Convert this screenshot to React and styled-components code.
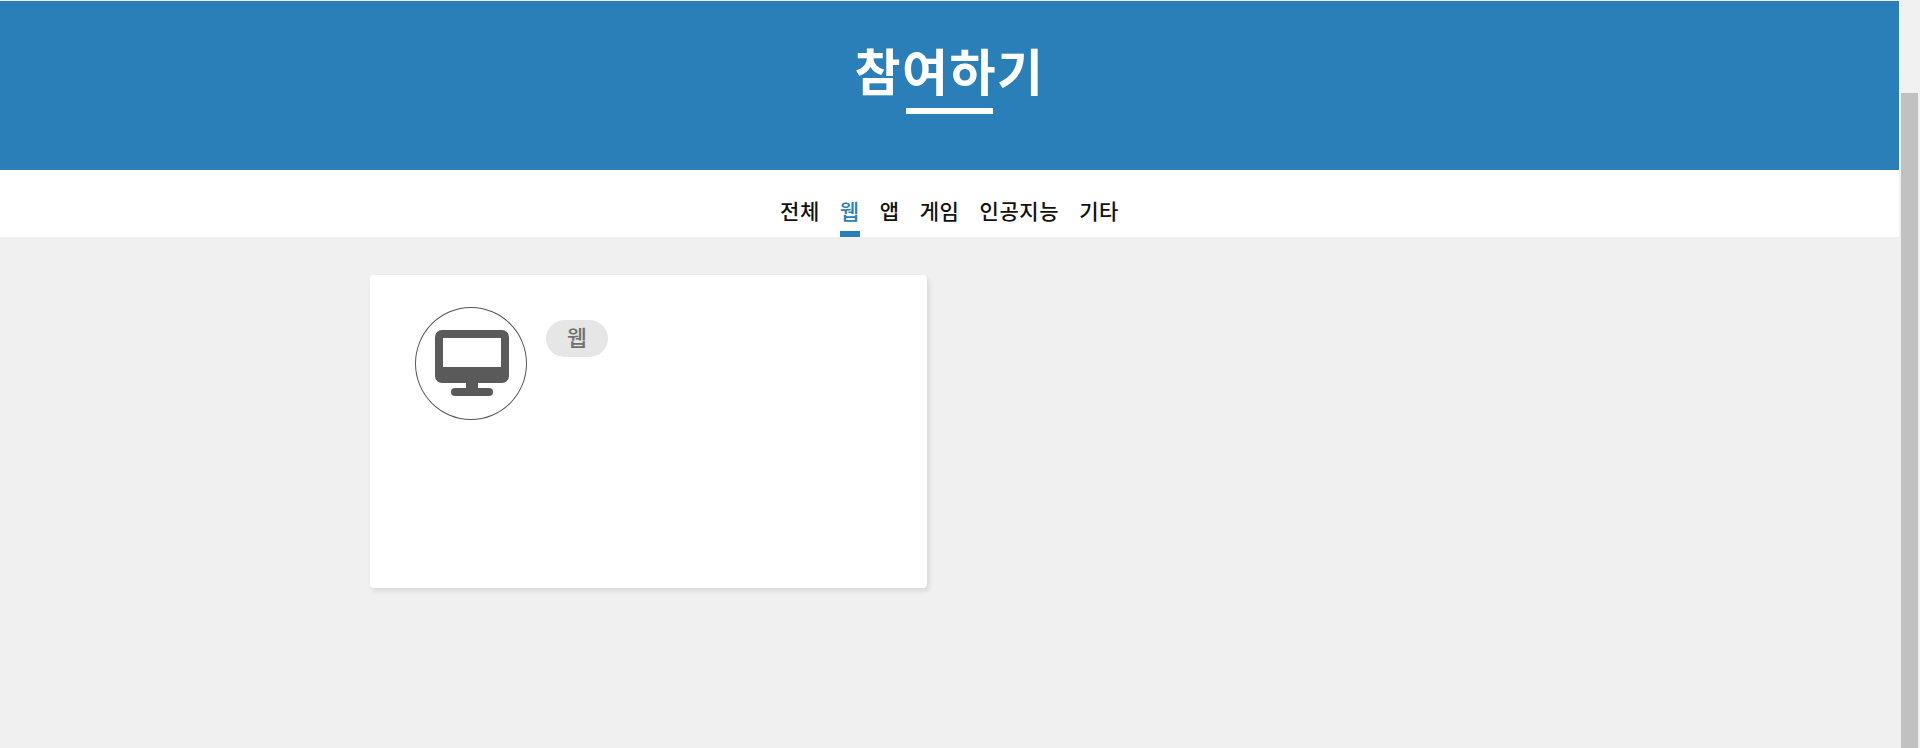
import React from "react";
import styled, { createGlobalStyle } from "styled-components";

const tabs = ["전체", "웹", "앱", "게임", "인공지능", "기타"];

function App() {
  return (
    <>
      <GlobalStyle />
      <Page>
        <Main>
          <Hero>
            <HeroTitle>참여하기</HeroTitle>
            <HeroLine />
          </Hero>
          <TabBar>
            {tabs.map((tab) => (
              <Tab key={tab} $active={tab === "웹"}>{tab}</Tab>
            ))}
          </TabBar>
          <Content>
            <Card>
              <IconCircle>
                <MonitorIcon width="74" height="66" viewBox="0 0 74 66" fill="#5a5a5a">
                  <path
                    fillRule="evenodd"
                    d="M7 0h60a7 7 0 0 1 7 7v39a7 7 0 0 1-7 7H7a7 7 0 0 1-7-7V7a7 7 0 0 1 7-7zM8 8v29h58V8z"
                  />
                  <rect x="31" y="52" width="12" height="7" />
                  <rect x="16" y="58" width="42" height="8" rx="4" />
                </MonitorIcon>
              </IconCircle>
              <Badge>웹</Badge>
            </Card>
          </Content>
        </Main>
        <ScrollTrack>
          <ScrollThumb />
        </ScrollTrack>
      </Page>
    </>
  );
}

export default App;

const GlobalStyle = createGlobalStyle`
  html, body {
    margin: 0;
    padding: 0;
    height: 100%;
    overflow: hidden;
  }
  body {
    font-family: "Noto Sans CJK KR", "Noto Sans", sans-serif;
  }
`;

const Page = styled.div`
  display: flex;
  height: 748px;
  background: #fff;
`;

const Main = styled.div`
  flex: 1;
  min-width: 0;
  display: flex;
  flex-direction: column;
  background: #f0f0f0;
`;

const Hero = styled.header`
  height: 169px;
  margin-top: 1px;
  background: #2a7fb8;
  display: flex;
  flex-direction: column;
  align-items: center;
  padding-top: 34px;
  box-sizing: border-box;
`;

const HeroTitle = styled.h1`
  margin: 0;
  height: 68px;
  line-height: 68px;
  font-size: 50px;
  font-weight: 700;
  letter-spacing: 1.5px;
  color: #fff;
`;

const HeroLine = styled.div`
  width: 87px;
  height: 6px;
  margin-top: 5px;
  background: #fff;
`;

const TabBar = styled.nav`
  height: 67px;
  background: #fff;
  display: flex;
  justify-content: center;
  gap: 20px;
`;

const Tab = styled.a`
  display: block;
  padding-top: 25px;
  height: 67px;
  box-sizing: border-box;
  font-size: 21px;
  line-height: 30px;
  font-weight: 500;
  letter-spacing: 0.6px;
  color: ${(props) => (props.$active ? "#2a7fb8" : "#111")};
  border-bottom: 6px solid ${(props) => (props.$active ? "#2a7fb8" : "transparent")};
`;

const Content = styled.main`
  flex: 1;
  padding: 38px 0 0 370px;
`;

const Card = styled.article`
  width: 557px;
  height: 313px;
  box-sizing: border-box;
  padding: 32px 45px;
  background: #fff;
  border-radius: 4px;
  box-shadow: 2px 3px 5px rgba(0, 0, 0, 0.1);
  display: flex;
  align-items: flex-start;
  gap: 19px;
`;

const IconCircle = styled.div`
  width: 112px;
  height: 113px;
  box-sizing: border-box;
  border: 1px solid #555;
  border-radius: 50%;
  display: flex;
  align-items: center;
  justify-content: center;
`;

const MonitorIcon = styled.svg`
  margin: 0 0 1px 2px;
`;

const Badge = styled.span`
  margin-top: 13px;
  width: 62px;
  height: 37px;
  line-height: 34px;
  text-align: center;
  border-radius: 19px;
  background: #e6e6e6;
  color: #707070;
  font-size: 21.6px;
  font-weight: 500;
`;

const ScrollTrack = styled.aside`
  width: 21px;
  flex: none;
  background: #f1f1f1;
  padding: 93px 2px 0;
  box-sizing: border-box;
`;

const ScrollThumb = styled.div`
  height: 100%;
  background: #c1c1c1;
`;
